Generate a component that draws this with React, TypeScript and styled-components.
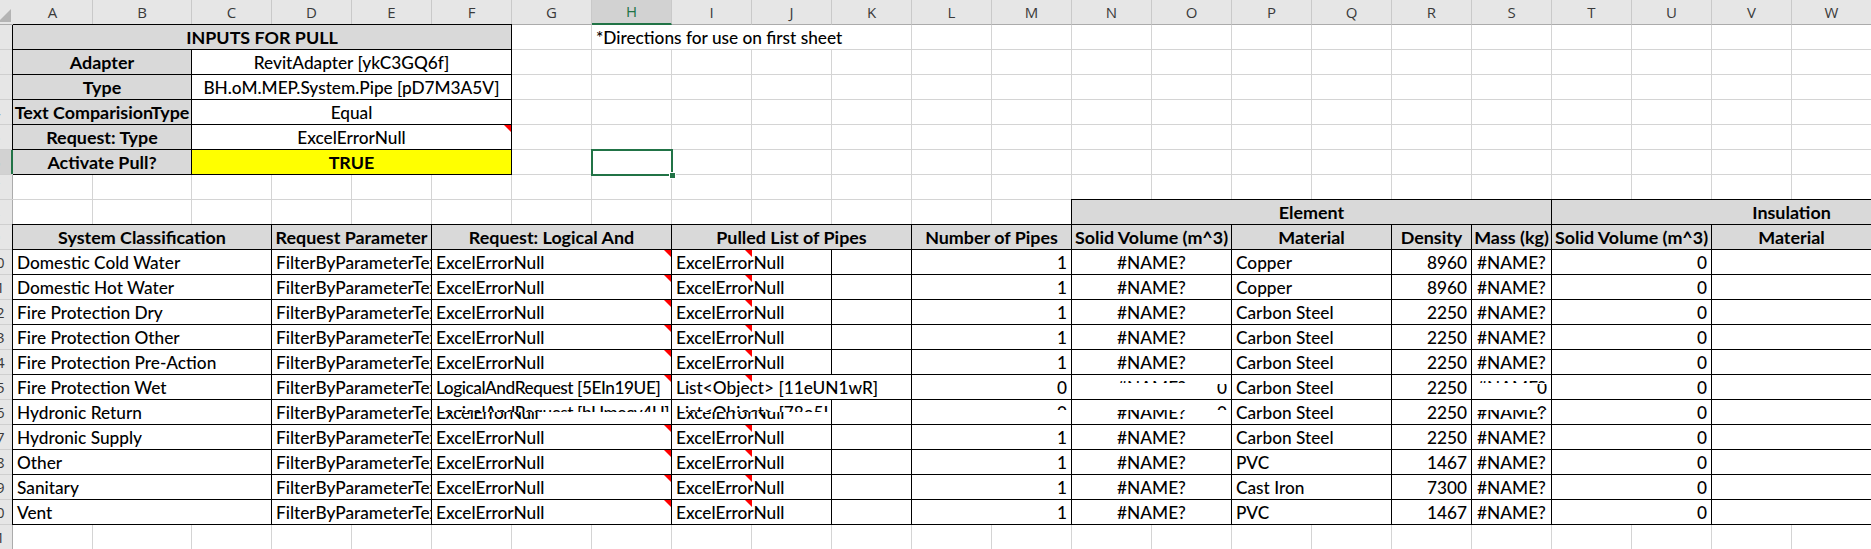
import React from "react";
import styled, { createGlobalStyle, css } from "styled-components";

const LETTERS = "ABCDEFGHIJKLMNOPQRSTUVWXY".split("");
const ci = (l: string) => LETTERS.indexOf(l) + 2;

const GlobalStyle = createGlobalStyle`
  html, body { margin: 0; padding: 0; background: #ffffff; overflow: hidden; }
  #root { width: 1871px; height: 549px; overflow: hidden; }
`;

const Sheet = styled.div`
  display: grid;
  grid-template-columns: 13px 80px 99px repeat(23, 80px);
  grid-template-rows: repeat(22, 25px);
  width: 2032px;
  font-family: Lato, "Liberation Sans", sans-serif;
  font-size: 17.25px;
  line-height: 25px;
  color: #000;
`;

const Corner = styled.div`
  grid-row: 1;
  grid-column: 1;
  background: #e6e6e6;
  border-bottom: 1px solid #ababab;
  overflow: hidden;
  position: relative;
`;

const ColHead = styled.div<{ $c: number; $active?: boolean }>`
  grid-row: 1;
  grid-column: ${(p) => p.$c};
  display: flex;
  align-items: center;
  justify-content: center;
  font-family: "Open Sans", "Noto Sans", sans-serif;
  font-size: 15px;
  color: ${(p) => (p.$active ? "#217346" : "#3a3a3a")};
  background: ${(p) => (p.$active ? "#d2d2d2" : "#e6e6e6")};
  border-right: 1px solid #c9c9c9;
  border-bottom: ${(p) => (p.$active ? "2px solid #217346" : "1px solid #ababab")};
  box-sizing: border-box;
`;

const RowHead = styled.div<{ $r: number; $active?: boolean }>`
  grid-row: ${(p) => p.$r + 1};
  grid-column: 1;
  display: flex;
  justify-content: flex-end;
  overflow: hidden;
  font-family: "Open Sans", "Noto Sans", sans-serif;
  font-size: 15px;
  line-height: 25px;
  color: #3a3a3a;
  background: ${(p) => (p.$active ? "#d2d2d2" : "#e6e6e6")};
  box-shadow: inset 0 -1px 0 #cfcfcf, inset -1px 0 0 #ababab;
  ${(p) =>
    p.$active &&
    css`
      z-index: 2;
      box-shadow: inset 0 -1px 0 #cfcfcf, inset -2px 0 0 #217346;
    `}
`;

const RowNum = styled.span`
  flex: 0 0 30px;
  text-align: center;
  margin-right: 2px;
`;

const GridCell = styled.div<{ $r: number; $c: number }>`
  grid-row: ${(p) => p.$r + 1};
  grid-column: ${(p) => p.$c};
  box-shadow: inset -1px -1px 0 #d4d4d4;
`;

type Fill = "white" | "gray" | "yellow";
type Align = "left" | "center" | "right";

const fills: Record<Fill, string> = {
  white: "#ffffff",
  gray: "#d9d9d9",
  yellow: "#ffff00",
};

const justify = (a?: Align) =>
  a === "center" ? "center" : a === "right" ? "flex-end" : "flex-start";

const Cell = styled.div<{
  $r: number;
  $c: number;
  $s?: number;
  $fill?: Fill;
  $bold?: boolean;
  $align?: Align;
  $boxed?: boolean;
  $tight?: boolean;
}>`
  grid-row: ${(p) => p.$r + 1};
  grid-column: ${(p) => p.$c} / span ${(p) => p.$s ?? 1};
  position: relative;
  display: flex;
  justify-content: ${(p) => justify(p.$align)};
  padding: 0 4px;
  overflow: hidden;
  white-space: nowrap;
  font-weight: ${(p) => (p.$bold ? 700 : 500)};
  font-size: ${(p) => (p.$bold ? "17.9px" : "17.25px")};
  letter-spacing: ${(p) => (p.$tight ? "-0.45px" : "normal")};
  background: ${(p) => fills[p.$fill ?? "white"]};
  ${(p) =>
    p.$boxed
      ? css`
          border: 1px solid #000;
          margin: -1px 0 0 -1px;
        `
      : css`
          box-shadow: inset -1px -1px 0 #d4d4d4;
        `}
`;

const Note = styled.span<{ $right?: number }>`
  position: absolute;
  top: 0;
  right: ${(p) => p.$right ?? 0}px;
  width: 0;
  height: 0;
  border-left: 7px solid transparent;
  border-top: 7px solid #ff0000;
`;

const Slice = styled.span<{ $align?: Align; $top?: number; $bottom?: number }>`
  position: absolute;
  inset: 0;
  display: flex;
  justify-content: ${(p) => justify(p.$align)};
  padding: 0 4px;
  white-space: nowrap;
  clip-path: inset(${(p) => p.$top ?? 0}px 0 ${(p) => p.$bottom ?? 0}px 0);
`;

const Selection = styled.div`
  grid-row: 7;
  grid-column: ${ci("H")};
  margin: -1px -1px -1px -1px;
  border: 2px solid #217346;
  position: relative;
  z-index: 3;
`;

const FillHandle = styled.span`
  position: absolute;
  right: -5px;
  bottom: -5px;
  width: 5px;
  height: 5px;
  background: #217346;
  border: 1px solid #ffffff;
`;

const inputs: [string, string][] = [
  ["Adapter", "RevitAdapter [ykC3GQ6f]"],
  ["Type", "BH.oM.MEP.System.Pipe [pD7M3A5V]"],
  ["Text ComparisionType", "Equal"],
  ["Request: Type", "ExcelErrorNull"],
];

const headers: [string, string, number][] = [
  ["System Classification", "A", 3],
  ["Request Parameter", "D", 2],
  ["Request: Logical And", "F", 3],
  ["Pulled List of Pipes", "I", 3],
  ["Number of Pipes", "L", 2],
  ["Solid Volume (m^3)", "N", 2],
  ["Material", "P", 2],
  ["Density", "R", 1],
  ["Mass (kg)", "S", 1],
  ["Solid Volume (m^3)", "T", 2],
  ["Material", "V", 2],
  ["Density", "X", 1],
  ["Mass (kg)", "Y", 1],
];

const pipes: [string, string, number][] = [
  ["Domestic Cold Water", "Copper", 8960],
  ["Domestic Hot Water", "Copper", 8960],
  ["Fire Protection Dry", "Carbon Steel", 2250],
  ["Fire Protection Other", "Carbon Steel", 2250],
  ["Fire Protection Pre-Action", "Carbon Steel", 2250],
  ["Fire Protection Wet", "Carbon Steel", 2250],
  ["Hydronic Return", "Carbon Steel", 2250],
  ["Hydronic Supply", "Carbon Steel", 2250],
  ["Other", "PVC", 1467],
  ["Sanitary", "Cast Iron", 7300],
  ["Vent", "PVC", 1467],
];

function PipeRow({ i, name, material, density }: { i: number; name: string; material: string; density: number }) {
  const r = 10 + i;
  const wet = r === 15;
  const ret = r === 16;
  return (
    <>
      <Cell $r={r} $c={ci("A")} $s={3} $boxed>{name}</Cell>
      <Cell $r={r} $c={ci("D")} $s={2} $boxed>FilterByParameterTextRequest</Cell>
      {ret ? (
        <Cell $r={r} $c={ci("F")} $s={3} $boxed $tight>
          <Slice $bottom={12}>LogicalAndRequest [bHmecv4U]</Slice>
          <Slice $top={12}>ExcelErrorNull</Slice>
        </Cell>
      ) : (
        <Cell $r={r} $c={ci("F")} $s={3} $boxed $tight={wet}>
          {wet ? "LogicalAndRequest [5EIn19UE]" : "ExcelErrorNull"}
          <Note />
        </Cell>
      )}
      {wet ? (
        <Cell $r={r} $c={ci("I")} $s={3} $boxed>
          {"List<Object> [11eUN1wR]"}
          <Note $right={159} />
        </Cell>
      ) : ret ? (
        <>
          <Cell $r={r} $c={ci("I")} $s={2} $boxed>
            <Slice $bottom={12}>{"List<Object> [78o5HUt7]"}</Slice>
            <Slice $top={12}>ExcelErrorNull</Slice>
          </Cell>
          <Cell $r={r} $c={ci("K")} $boxed />
        </>
      ) : (
        <>
          <Cell $r={r} $c={ci("I")} $s={2} $boxed>
            ExcelErrorNull
            <Note $right={79} />
          </Cell>
          <Cell $r={r} $c={ci("K")} $boxed />
        </>
      )}
      {ret ? (
        <Cell $r={r} $c={ci("L")} $s={2} $boxed>
          <Slice $align="right" $bottom={14}>0</Slice>
        </Cell>
      ) : (
        <Cell $r={r} $c={ci("L")} $s={2} $boxed $align="right">{wet ? "0" : "1"}</Cell>
      )}
      {wet || ret ? (
        <Cell $r={r} $c={ci("N")} $s={2} $boxed>
          <Slice $align="center" {...(wet ? { $bottom: 16 } : { $top: 10 })}>#NAME?</Slice>
          <Slice $align="right" {...(wet ? { $top: 9 } : { $bottom: 14 })}>0</Slice>
        </Cell>
      ) : (
        <Cell $r={r} $c={ci("N")} $s={2} $boxed $align="center">#NAME?</Cell>
      )}
      <Cell $r={r} $c={ci("P")} $s={2} $boxed>{material}</Cell>
      <Cell $r={r} $c={ci("R")} $boxed $align="right">{density}</Cell>
      {wet || ret ? (
        <Cell $r={r} $c={ci("S")} $boxed>
          <Slice $align="center" {...(wet ? { $bottom: 16 } : { $top: 10 })}>#NAME?</Slice>
          <Slice $align="right" {...(wet ? { $top: 9 } : { $bottom: 14 })}>0</Slice>
        </Cell>
      ) : (
        <Cell $r={r} $c={ci("S")} $boxed $align="center">#NAME?</Cell>
      )}
      <Cell $r={r} $c={ci("T")} $s={2} $boxed $align="right">0</Cell>
      <Cell $r={r} $c={ci("V")} $s={2} $boxed />
    </>
  );
}

export default function App() {
  const background: React.ReactNode[] = [];
  for (let r = 1; r <= 21; r++) {
    for (let c = 2; c <= 26; c++) {
      background.push(<GridCell key={`g${r}-${c}`} $r={r} $c={c} />);
    }
  }
  const rowHeads: React.ReactNode[] = [];
  for (let r = 1; r <= 21; r++) {
    rowHeads.push(
      <RowHead key={`r${r}`} $r={r} $active={r === 6}>
        <RowNum>{r}</RowNum>
      </RowHead>
    );
  }

  return (
    <>
      <GlobalStyle />
      <Sheet>
        {background}
        {rowHeads}

        <Cell $r={1} $c={ci("A")} $s={6} $fill="gray" $bold $align="center" $boxed>
          INPUTS FOR PULL
        </Cell>
        {inputs.map(([label, value], i) => (
          <React.Fragment key={label}>
            <Cell $r={2 + i} $c={ci("A")} $s={2} $fill="gray" $bold $align="center" $boxed>
              {label}
            </Cell>
            <Cell $r={2 + i} $c={ci("C")} $s={4} $align="center" $boxed>
              {value}
              {i === 3 && <Note />}
            </Cell>
          </React.Fragment>
        ))}
        <Cell $r={6} $c={ci("A")} $s={2} $fill="gray" $bold $align="center" $boxed>
          Activate Pull?
        </Cell>
        <Cell $r={6} $c={ci("C")} $s={4} $fill="yellow" $bold $align="center" $boxed>
          TRUE
        </Cell>

        <Cell $r={1} $c={ci("H")} $s={4}>*Directions for use on first sheet</Cell>

        <Cell $r={8} $c={ci("N")} $s={6} $fill="gray" $bold $align="center" $boxed>
          Element
        </Cell>
        <Cell $r={8} $c={ci("T")} $s={6} $fill="gray" $bold $align="center" $boxed>
          Insulation
        </Cell>

        {headers.map(([text, col, span], i) => (
          <Cell key={`h${i}`} $r={9} $c={ci(col)} $s={span} $fill="gray" $bold $align="center" $boxed>
            {text}
          </Cell>
        ))}

        {pipes.map(([name, material, density], i) => (
          <PipeRow key={name} i={i} name={name} material={material} density={density} />
        ))}

        <Selection>
          <FillHandle />
        </Selection>

        <Corner>
          <svg width="13" height="25" viewBox="0 0 13 25">
            <polygon points="11,9 11,22 -2,22" fill="#b4b4b4" />
          </svg>
        </Corner>
        {LETTERS.map((l) => (
          <ColHead key={l} $c={ci(l)} $active={l === "H"}>
            {l}
          </ColHead>
        ))}
      </Sheet>
    </>
  );
}
